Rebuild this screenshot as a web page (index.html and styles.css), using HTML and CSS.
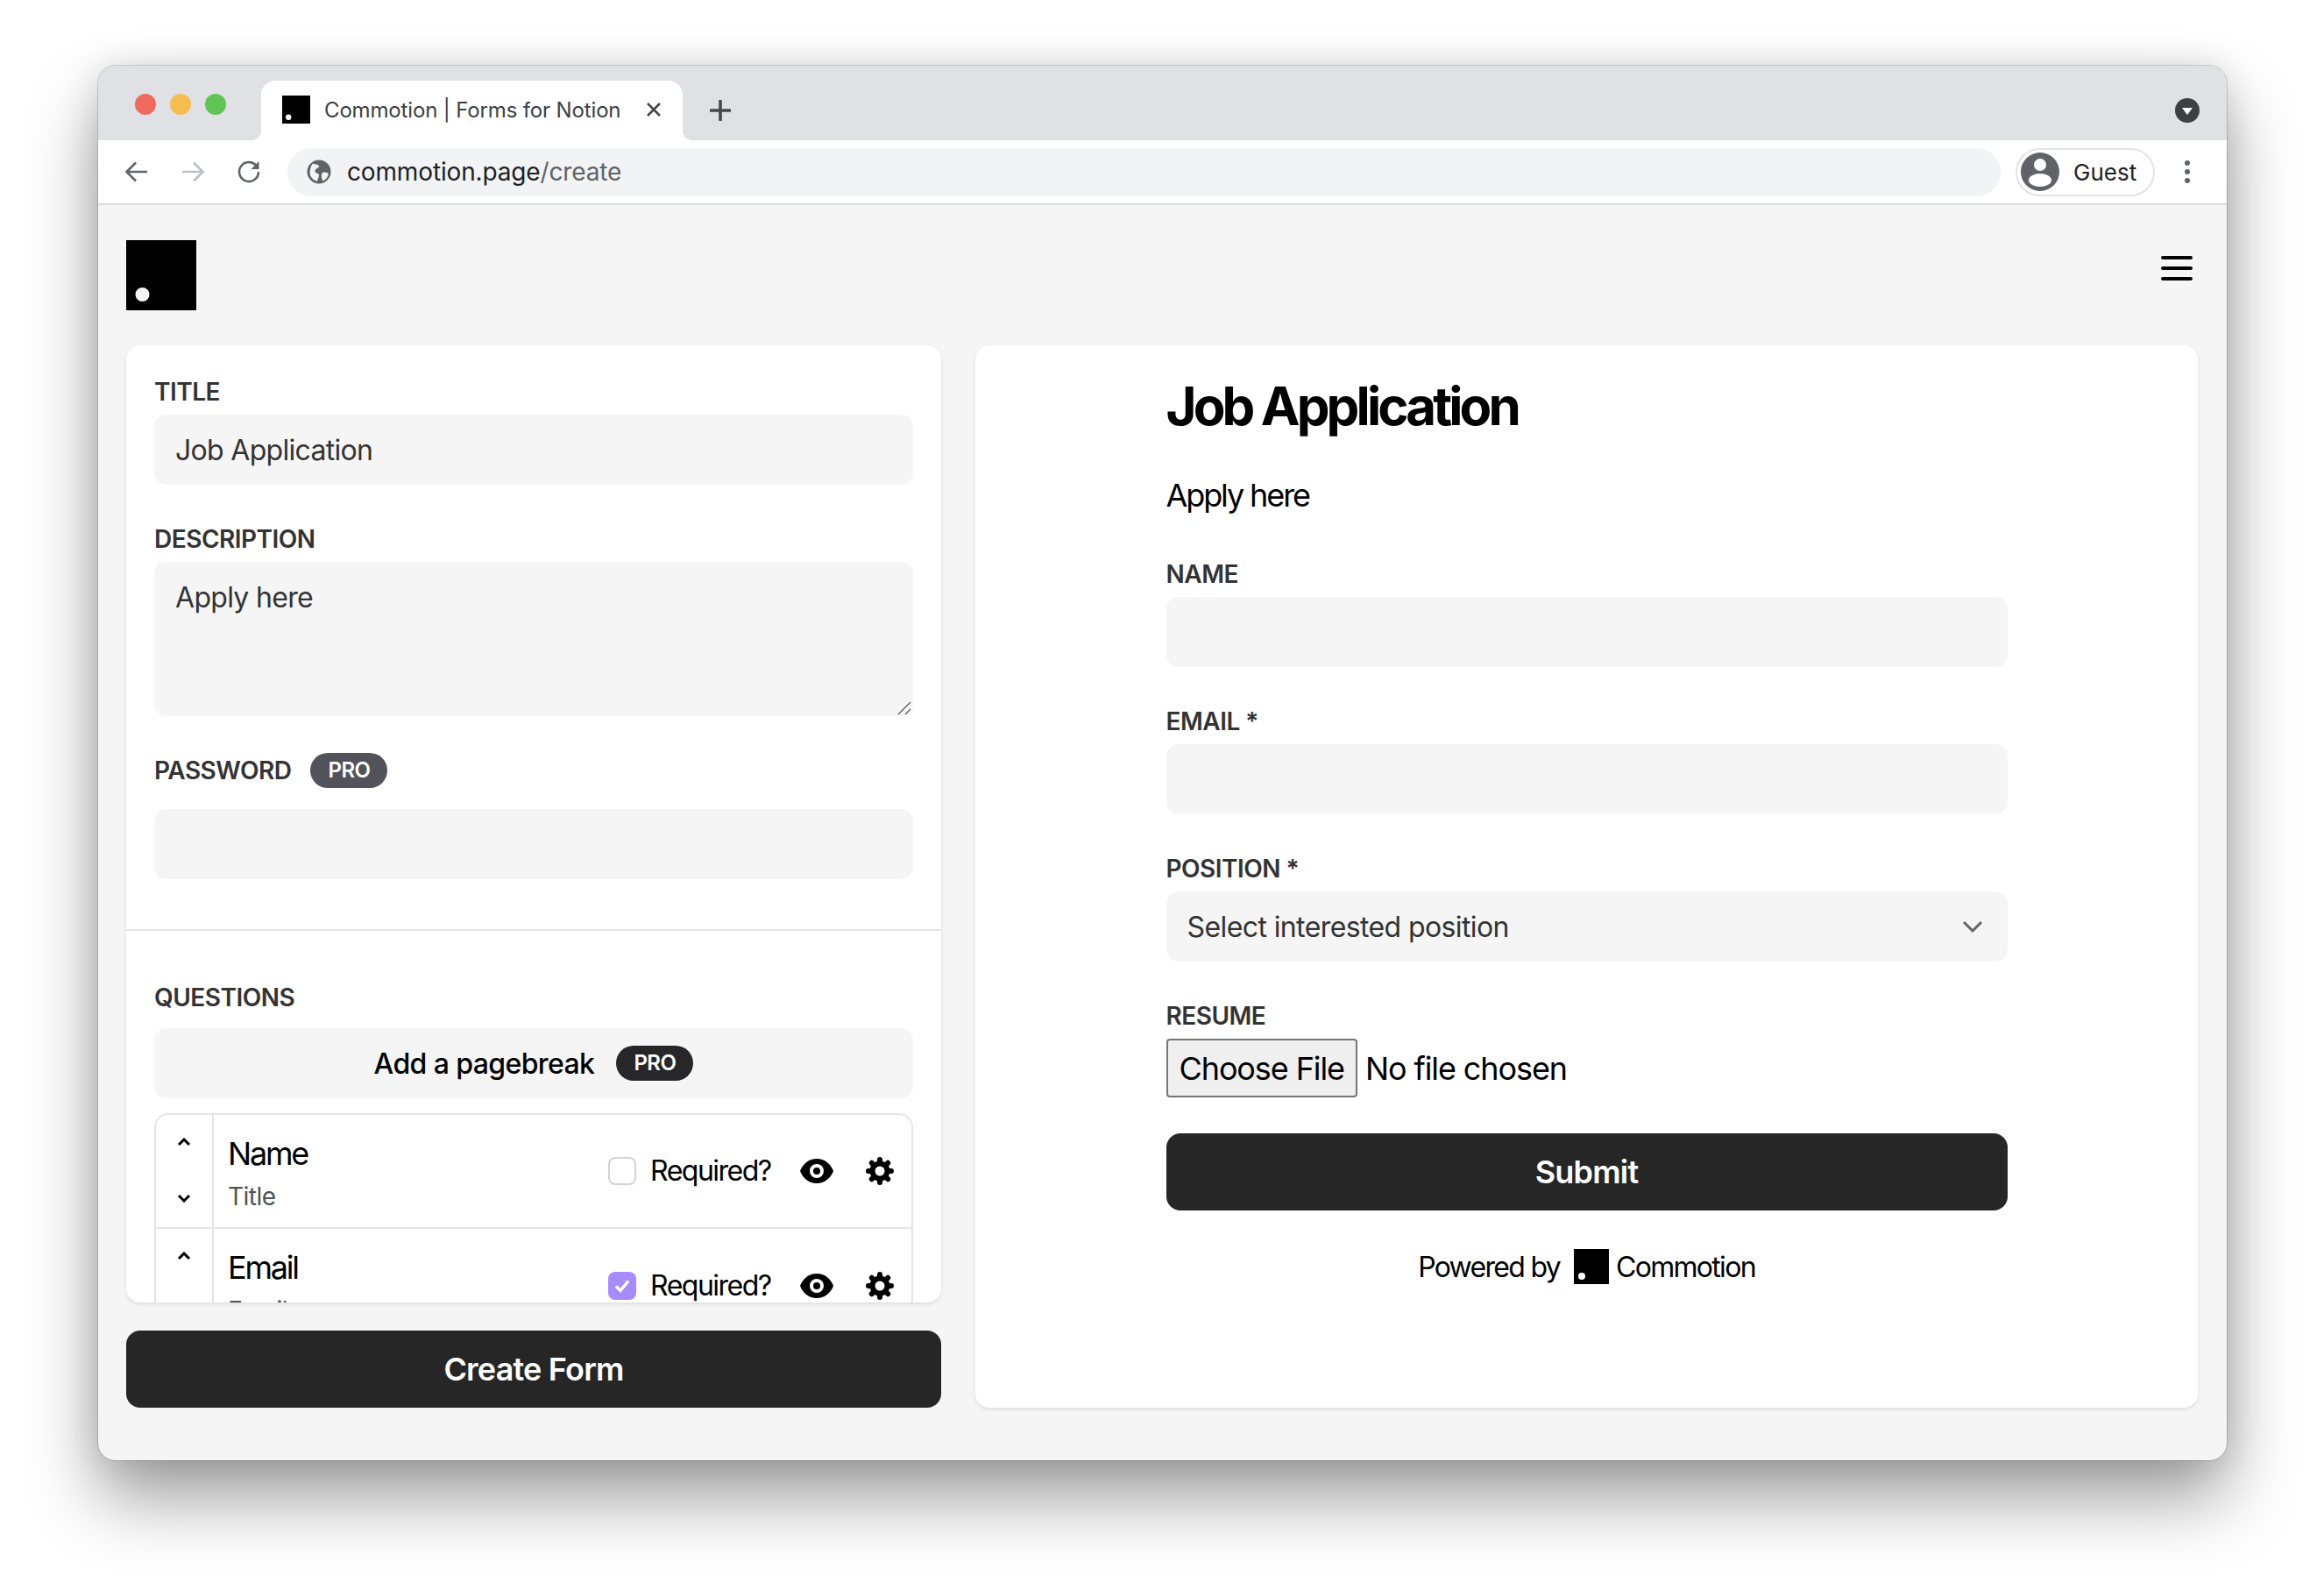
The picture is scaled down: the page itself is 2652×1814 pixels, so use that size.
FILE: index.html
```html
<!DOCTYPE html>
<html lang="en">

<head>
    <meta charset="UTF-8">
    <meta name="viewport" content="width=device-width, initial-scale=1.0">
    <title>Commotion | Forms for Notion</title>
    <link rel="stylesheet" href="styles.css">
</head>

<body>
    <div class="window">
        <!-- Tab strip -->
        <div class="tabstrip">
            <div class="lights">
                <span class="light red"></span>
                <span class="light yellow"></span>
                <span class="light green"></span>
            </div>
            <div class="tab">
                <svg class="favicon" viewBox="0 0 40 40"><rect width="40" height="40"/><circle cx="9" cy="31" r="4" fill="#fff"/></svg>
                <span class="tab-title">Commotion | Forms for Notion</span>
                <svg class="tab-close" viewBox="0 0 20 20"><path d="M3 3L17 17M17 3L3 17"/></svg>
            </div>
            <svg class="new-tab" viewBox="0 0 24 24"><path d="M12 1V23M1 12H23"/></svg>
            <svg class="tab-search" viewBox="0 0 28 28"><circle cx="14" cy="14" r="14"/><path d="M8 11H20L14 19Z" fill="#fff"/></svg>
        </div>

        <!-- Toolbar -->
        <div class="toolbar">
            <svg class="nav-icon" viewBox="0 0 28 28"><path d="M26 14H3M13 3.5L2.5 14L13 24.5"/></svg>
            <svg class="nav-icon off" viewBox="0 0 28 28"><path d="M2 14H25M15 3.5L25.5 14L15 24.5"/></svg>
            <svg class="nav-icon" viewBox="0 0 28 28"><path d="M23.5 8.5A11 11 0 1 0 25 14"/><path class="fill" d="M25.5 2V11H16.5Z"/></svg>
            <div class="omnibox">
                <svg class="globe" viewBox="0 0 28 28"><circle cx="14" cy="14" r="13.5" fill="#5f6368"/><path d="M7 4.5C10 6 13 5 14 7.5C14.500 10 10 10 9.500 12.500C9 15 12 15.500 13.500 16.500C15 18 13 21 12 25C9 24 6 22 4 18C3 14 4 8 7 4.500ZM18 15C21 14 24 15 25 16.500C24 20 22 23 18.500 24.500C17 22 16 17 18 15Z" fill="#f1f3f4"/></svg>
                <span class="url">commotion.page<span class="url-path">/create</span></span>
            </div>
            <div class="guest">
                <svg class="avatar" viewBox="0 0 44 44"><circle cx="22" cy="22" r="22" fill="#5f6368"/><circle cx="22" cy="14" r="7" fill="#fff"/><ellipse cx="22" cy="31.500" rx="13" ry="7.500" fill="#fff"/></svg>
                <span class="guest-name">Guest</span>
            </div>
            <div class="menu-dots"><span></span><span></span><span></span></div>
        </div>

        <!-- Page -->
        <div class="page">
            <div class="topbar">
                <svg class="logo" viewBox="0 0 80 80"><rect width="80" height="80"/><circle cx="18.500" cy="62" r="8" fill="#f5f5f5"/></svg>
                <div class="burger"><span></span><span></span><span></span></div>
            </div>

            <div class="columns">
                <div class="builder">
                    <div class="card settings">
                        <div class="settings-top">
                            <label class="label">TITLE</label>
                            <input class="field" type="text" value="Job Application">

                            <label class="label">DESCRIPTION</label>
                            <div class="area-wrap">
                                <textarea class="field area">Apply here</textarea>
                                <svg class="grip" viewBox="0 0 16 16"><path d="M1 15L15 1M9 15L15 9"/></svg>
                            </div>

                            <div class="label-row">
                                <label class="label">PASSWORD</label>
                                <span class="badge grey">PRO</span>
                            </div>
                            <input class="field" type="password">
                        </div>

                        <div class="questions">
                            <label class="label">QUESTIONS</label>
                            <div class="pagebreak">Add a pagebreak <span class="badge">PRO</span></div>

                            <div class="question-list">
                                <div class="question">
                                    <div class="arrows">
                                        <svg viewBox="0 0 16 10"><path d="M2 8L8 2L14 8"/></svg>
                                        <svg viewBox="0 0 16 10"><path d="M2 2L8 8L14 2"/></svg>
                                    </div>
                                    <div class="question-text">
                                        <div class="question-name">Name</div>
                                        <div class="question-type">Title</div>
                                    </div>
                                    <div class="question-tools">
                                        <span class="check"></span>
                                        <span class="required">Required?</span>
                                        <svg class="eye" viewBox="0 0 38 28"><path d="M19 0C28 0 35 6 38 14C35 22 28 28 19 28C10 28 3 22 0 14C3 6 10 0 19 0Z"/><circle cx="19" cy="14" r="8" fill="#fff"/><circle cx="19" cy="14" r="4"/></svg>
                                        <svg class="gear" viewBox="0 0 32 32"><circle cx="16" cy="16" r="11.500"/><path class="teeth" d="M16 3V29M3 16H29M6.800 6.800L25.200 25.200M25.200 6.800L6.800 25.200"/><circle cx="16" cy="16" r="5.500" fill="#fff"/></svg>
                                    </div>
                                </div>
                                <div class="question">
                                    <div class="arrows">
                                        <svg viewBox="0 0 16 10"><path d="M2 8L8 2L14 8"/></svg>
                                        <svg viewBox="0 0 16 10"><path d="M2 2L8 8L14 2"/></svg>
                                    </div>
                                    <div class="question-text">
                                        <div class="question-name">Email</div>
                                        <div class="question-type">Email</div>
                                    </div>
                                    <div class="question-tools">
                                        <span class="check on"><svg viewBox="0 0 32 32"><path d="M9 16.500L14 21.500L23 10.500"/></svg></span>
                                        <span class="required">Required?</span>
                                        <svg class="eye" viewBox="0 0 38 28"><path d="M19 0C28 0 35 6 38 14C35 22 28 28 19 28C10 28 3 22 0 14C3 6 10 0 19 0Z"/><circle cx="19" cy="14" r="8" fill="#fff"/><circle cx="19" cy="14" r="4"/></svg>
                                        <svg class="gear" viewBox="0 0 32 32"><circle cx="16" cy="16" r="11.500"/><path class="teeth" d="M16 3V29M3 16H29M6.800 6.800L25.200 25.200M25.200 6.800L6.800 25.200"/><circle cx="16" cy="16" r="5.500" fill="#fff"/></svg>
                                    </div>
                                </div>
                            </div>
                        </div>
                    </div>
                    <button class="primary">Create Form</button>
                </div>

                <div class="card preview">
                    <div class="form">
                        <h1 class="form-title">Job Application</h1>
                        <p class="form-desc">Apply here</p>

                        <label class="label">NAME</label>
                        <input class="field" type="text">

                        <label class="label">EMAIL *</label>
                        <input class="field" type="text">

                        <label class="label">POSITION *</label>
                        <div class="field select">
                            <span>Select interested position</span>
                            <svg viewBox="0 0 24 14"><path d="M2 2L12 12L22 2"/></svg>
                        </div>

                        <label class="label">RESUME</label>
                        <input class="file" type="file">

                        <button class="primary submit">Submit</button>

                        <div class="powered">
                            <span>Powered by</span>
                            <svg viewBox="0 0 40 40"><rect width="40" height="40"/><circle cx="9" cy="31" r="4" fill="#fff"/></svg>
                            <span>Commotion</span>
                        </div>
                    </div>
                </div>
            </div>
        </div>
    </div>
</body>

</html>
```

FILE: styles.css
```css
* {
    box-sizing: border-box;
}

body {
    margin: 0;
    padding: 75px 111px 148px 112px;
    background-color: #fff;
    font-family: Inter, "Liberation Sans", sans-serif;
    color: #000;
}

svg {
    display: block;
    flex-shrink: 0;
}

.window {
    height: 1591px;
    border-radius: 20px;
    overflow: hidden;
    outline: 1px solid rgba(0, 0, 0, 0.15);
    box-shadow: 0 44px 80px rgba(0, 0, 0, 0.38), 0 0 40px rgba(0, 0, 0, 0.12);
    background-color: #f5f5f5;
    display: flex;
    flex-direction: column;
}

/* browser chrome */
.tabstrip {
    height: 85px;
    background-color: #dfe1e5;
    display: flex;
    align-items: flex-end;
    padding-left: 42px;
    padding-right: 31px;
}

.lights {
    display: flex;
    gap: 16px;
    align-self: flex-start;
    margin-top: 32px;
}

.light {
    width: 24px;
    height: 24px;
    border-radius: 50%;
}

.red { background-color: #ee6a5f; }
.yellow { background-color: #f5bd4f; }
.green { background-color: #61c454; }

.tab {
    position: relative;
    width: 481px;
    height: 68px;
    margin-left: 40px;
    padding: 0 23px 2px 24px;
    background-color: #fff;
    border-radius: 16px 16px 0 0;
    display: flex;
    align-items: center;
}

.tab::before,
.tab::after {
    content: "";
    position: absolute;
    bottom: 0;
    width: 12px;
    height: 12px;
}

.tab::before {
    left: -12px;
    background: radial-gradient(circle at 0 0, transparent 12px, #fff 12.5px);
}

.tab::after {
    right: -12px;
    background: radial-gradient(circle at 100% 0, transparent 12px, #fff 12.5px);
}

.favicon {
    width: 32px;
    height: 32px;
}

.tab-title {
    margin-left: 16px;
    font-size: 24px;
    letter-spacing: -0.15px;
    color: #3c4043;
    white-space: nowrap;
}

.tab-close {
    width: 20px;
    height: 20px;
    margin-left: auto;
    fill: none;
    stroke: #45484c;
    stroke-width: 2.6;
}

.new-tab {
    width: 24px;
    height: 24px;
    margin-left: 31px;
    margin-bottom: 22px;
    fill: none;
    stroke: #45484c;
    stroke-width: 3.6;
    stroke-linecap: round;
}

.tab-search {
    width: 28px;
    height: 28px;
    margin-left: auto;
    margin-bottom: 20px;
    fill: #3c4043;
}

.toolbar {
    height: 74px;
    background-color: #fff;
    border-bottom: 2px solid #dadce0;
    display: flex;
    align-items: center;
    padding: 0 31px 0 30px;
}

.nav-icon {
    width: 28px;
    height: 28px;
    margin-right: 36px;
    fill: none;
    stroke: #5f6368;
    stroke-width: 2.6;
}

.nav-icon.off {
    stroke: #bdc1c6;
}

.nav-icon .fill {
    fill: #5f6368;
    stroke: none;
}

.omnibox {
    width: 1955px;
    height: 55px;
    margin-left: -6px;
    padding-left: 22px;
    background-color: #f1f3f4;
    border-radius: 28px;
    display: flex;
    align-items: center;
}

.globe {
    width: 28px;
    height: 28px;
}

.url {
    margin-left: 18px;
    font-size: 28px;
    letter-spacing: -0.15px;
    color: #202124;
}

.url-path {
    color: #5f6368;
}

.guest {
    width: 159px;
    height: 55px;
    margin-left: 17px;
    padding-left: 4px;
    border: 2px solid #e3e4e6;
    border-radius: 28px;
    display: flex;
    align-items: center;
}

.avatar {
    width: 44px;
    height: 44px;
}

.guest-name {
    margin-left: 16px;
    font-size: 26px;
    color: #202124;
}

.menu-dots {
    margin-left: auto;
    margin-right: 11px;
    display: flex;
    flex-direction: column;
    gap: 4px;
}

.menu-dots span {
    width: 6px;
    height: 6px;
    border-radius: 50%;
    background-color: #5f6368;
}

/* page */
.page {
    flex: 1;
    min-height: 0;
    padding: 40px 32px 60px;
    display: flex;
    flex-direction: column;
}

.topbar {
    display: flex;
    justify-content: space-between;
    align-items: flex-start;
    margin-bottom: 40px;
}

.logo {
    width: 80px;
    height: 80px;
}

.burger {
    display: flex;
    flex-direction: column;
    gap: 8px;
    margin: 18px 7px 0 0;
}

.burger span {
    width: 36px;
    height: 4px;
    border-radius: 2px;
    background-color: #000;
}

.columns {
    flex: 1;
    min-height: 0;
    margin-right: 1px;
    display: grid;
    grid-template-columns: 930px 1fr;
    gap: 39px;
}

.builder {
    display: flex;
    flex-direction: column;
    min-height: 0;
}

.card {
    background-color: #fff;
    border-radius: 16px;
    box-shadow: 0 2px 4px rgba(0, 0, 0, 0.1);
}

.settings {
    flex: 1;
    min-height: 0;
    overflow: hidden;
    margin-bottom: 32px;
}

.settings-top {
    padding: 33px 32px 57px;
    border-bottom: 2px solid #e5e5e5;
}

.label {
    display: block;
    font-size: 28px;
    line-height: 40px;
    font-weight: 600;
    letter-spacing: -0.5px;
    color: #333;
}

.field {
    display: block;
    width: 100%;
    height: 80px;
    margin: 6px 0 42px;
    padding: 0 24px;
    border: none;
    border-radius: 14px;
    background-color: #f5f5f5;
    font-family: inherit;
    font-size: 32px;
    letter-spacing: -0.7px;
    color: #333;
}

.area-wrap {
    position: relative;
}

.area {
    height: 176px;
    padding-top: 21px;
    line-height: 40px;
    resize: none;
}

.grip {
    position: absolute;
    right: 2px;
    bottom: 1px;
    width: 16px;
    height: 16px;
    fill: none;
    stroke: #555;
    stroke-width: 1.2;
}

.label-row {
    display: flex;
    align-items: center;
    gap: 22px;
    margin-bottom: 24px;
}

.badge {
    display: inline-block;
    width: 88px;
    height: 40px;
    line-height: 40px;
    text-align: center;
    border-radius: 20px;
    background-color: #27272a;
    color: #fff;
    font-size: 24px;
    font-weight: 600;
    letter-spacing: -0.5px;
}

.badge.grey {
    background-color: #52525b;
}

.settings-top .field:last-child {
    margin-bottom: 0;
}

.questions {
    padding: 56px 32px 0;
}

.pagebreak {
    height: 80px;
    margin-top: 15px;
    border-radius: 14px;
    background-color: #f5f5f5;
    font-size: 32px;
    font-weight: 500;
    letter-spacing: -0.6px;
    display: flex;
    align-items: center;
    justify-content: center;
    gap: 25px;
}

.question-list {
    margin-top: 17px;
    border: 2px solid #e5e5e5;
    border-radius: 16px;
}

.question {
    height: 130px;
    display: flex;
    border-bottom: 2px solid #e5e5e5;
}

.question:last-child {
    border-bottom: none;
}

.arrows {
    width: 66px;
    border-right: 2px solid #e5e5e5;
    padding: 26px 0 28px;
    display: flex;
    flex-direction: column;
    justify-content: space-between;
    align-items: center;
}

.arrows svg {
    width: 16px;
    height: 10px;
    fill: none;
    stroke: #000;
    stroke-width: 3;
}

.question-text {
    flex: 1;
    padding-left: 16px;
    padding-top: 22px;
}

.question-name {
    font-size: 36px;
    line-height: 44px;
    letter-spacing: -2.2px;
}

.question-type {
    margin-top: 7px;
    font-size: 28px;
    line-height: 40px;
    letter-spacing: -0.5px;
    color: #525252;
}

.question-tools {
    display: flex;
    align-items: center;
    padding-right: 20px;
    padding-bottom: 1px;
}

.check {
    width: 32px;
    height: 32px;
    border: 2px solid #d4d4d4;
    border-radius: 8px;
    margin-right: 16px;
}

.check.on {
    border: none;
    background-color: #a78bfa;
}

.check svg {
    width: 32px;
    height: 32px;
    fill: none;
    stroke: #fff;
    stroke-width: 3.5;
}

.required {
    width: 138px;
    font-size: 32px;
    letter-spacing: -1.5px;
    white-space: nowrap;
}

.eye {
    width: 38px;
    height: 28px;
    margin-left: 33px;
}

.gear {
    width: 32px;
    height: 32px;
    margin-left: 37px;
}

.teeth {
    fill: none;
    stroke: #000;
    stroke-width: 6;
    stroke-linecap: round;
}

.primary {
    display: block;
    width: 100%;
    height: 88px;
    border: none;
    border-radius: 16px;
    background-color: #262626;
    color: #fff;
    font-family: inherit;
    font-size: 36px;
    font-weight: 600;
    letter-spacing: -0.8px;
}

/* preview form */
.preview {
    min-height: 0;
}

.form {
    width: 960px;
    margin: 0 auto;
}

.form-title {
    margin: 0;
    padding-top: 33px;
    font-size: 60px;
    line-height: 72px;
    font-weight: 700;
    letter-spacing: -3.9px;
}

.form-desc {
    margin: 44px 0 0;
    padding-bottom: 48px;
    font-size: 36px;
    line-height: 44px;
    letter-spacing: -2.1px;
}

.select {
    display: flex;
    align-items: center;
    justify-content: space-between;
    padding-right: 28px;
    letter-spacing: -0.6px;
}

.select svg {
    width: 24px;
    height: 14px;
    fill: none;
    stroke: #666;
    stroke-width: 3;
}

.file {
    display: block;
    width: 100%;
    margin-top: 6px;
    font-family: inherit;
    font-size: 36px;
    letter-spacing: -1.1px;
    color: #000;
}

.file::file-selector-button {
    height: 67px;
    padding: 0 13px;
    margin-right: 9px;
    border: 2px solid #767676;
    border-radius: 4px;
    background-color: #efefef;
    font-family: inherit;
    font-size: 36px;
    letter-spacing: -1.1px;
}

.submit {
    margin-top: 41px;
}

.powered {
    margin-top: 44px;
    display: flex;
    align-items: center;
    justify-content: center;
    gap: 8px;
    font-size: 32px;
    letter-spacing: -1.7px;
}

.powered span:first-child {
    margin-right: 8px;
}

.powered svg {
    width: 40px;
    height: 40px;
}
```
